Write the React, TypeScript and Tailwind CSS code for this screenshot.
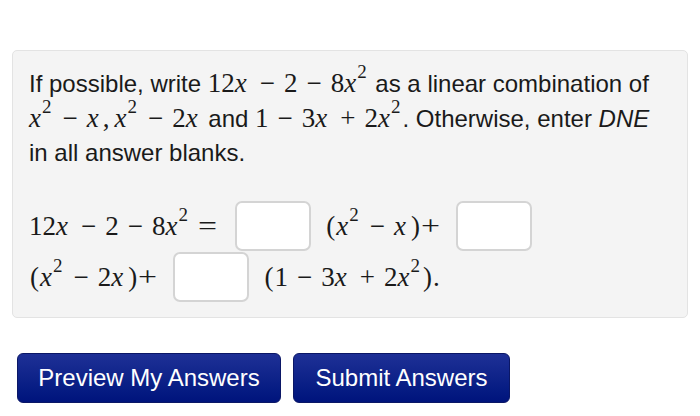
import React from 'react';

const X = ({ t }: { t?: boolean }) => <span className={t ? 'italic mr-[1px]' : 'italic mr-[4px]'}>x</span>;
const Op = ({ c }: { c: string }) => <span className="mx-[9px]">{c}</span>;
const Rel = ({ c }: { c: string }) => <span className="mx-[10px] inline-block scale-x-125">{c}</span>;
const P = ({ c }: { c: string }) => <span className="mx-[1px]">{c}</span>;
const Sq = () => <sup className="text-[19px] not-italic relative -top-[4px] align-super leading-none mr-[2px]">2</sup>;
const M = ({ children }: { children: React.ReactNode }) => (
  <span className="font-['Liberation_Serif',serif] text-[27px] whitespace-nowrap">{children}</span>
);
const Blank = () => (
  <span className="inline-block w-[76px] h-[50px] rounded-[7px] border-2 border-[#d4d4d4] bg-white align-middle" />
);

export default function App() {
  return (
    <div className="w-[700px] h-[416px] bg-white pt-[50px] px-[12px] font-['Liberation_Sans',Arial,sans-serif] text-[#1a1a1a]">
      <div className="rounded-[5px] border border-[#e3e3e3] bg-[#f4f4f4] pl-[16px] pr-[10px] pt-[15px] pb-[15px]">
        <div className="text-[24px] leading-[34px]">
          <div className="whitespace-nowrap">
            If possible, write{' '}
            <M>12<X /><Op c="−" />2<Op c="−" />8<X t /><Sq /></M> as a linear combination of
          </div>
          <div className="whitespace-nowrap">
            <M><X t /><Sq /><Op c="−" /><X />,<span className="ml-[5px]" /><X t /><Sq /><Op c="−" />2<X /></M> and{' '}
            <M>1<Op c="−" />3<X /><Op c="+" />2<X t /><Sq /></M>. Otherwise, enter <span className="italic">DNE</span>
          </div>
          <div>in all answer blanks.</div>
        </div>

        <div className="mt-[31px] flex flex-col gap-[1px]">
          <div className="flex items-center h-[50px]">
            <M>12<X /><Op c="−" />2<Op c="−" />8<X t /><Sq /><Rel c="=" /></M>
            <span className="ml-[10px] mr-[14px]"><Blank /></span>
            <M><P c="(" /><X t /><Sq /><Op c="−" /><X /><P c=")" /><span className="inline-block scale-x-125 ml-[2px]">+</span></M>
            <span className="ml-[18px]"><Blank /></span>
          </div>
          <div className="flex items-center h-[50px]">
            <M><P c="(" /><X t /><Sq /><Op c="−" />2<X /><P c=")" /><span className="inline-block scale-x-125 ml-[2px]">+</span></M>
            <span className="ml-[18px] mr-[14px]"><Blank /></span>
            <M><P c="(" />1<Op c="−" />3<X /><Op c="+" />2<X t /><Sq /><P c=")" />.</M>
          </div>
        </div>
      </div>

      <div className="mt-[35px] ml-[5px] flex gap-[12px]">
        <button className="w-[264px] h-[50px] rounded-[6px] border border-[#0b1766] bg-gradient-to-b from-[#1e3096] to-[#00137c] text-white text-[24px]">
          Preview My Answers
        </button>
        <button className="w-[217px] h-[50px] rounded-[6px] border border-[#0b1766] bg-gradient-to-b from-[#1e3096] to-[#00137c] text-white text-[24px]">
          Submit Answers
        </button>
      </div>
    </div>
  );
}
